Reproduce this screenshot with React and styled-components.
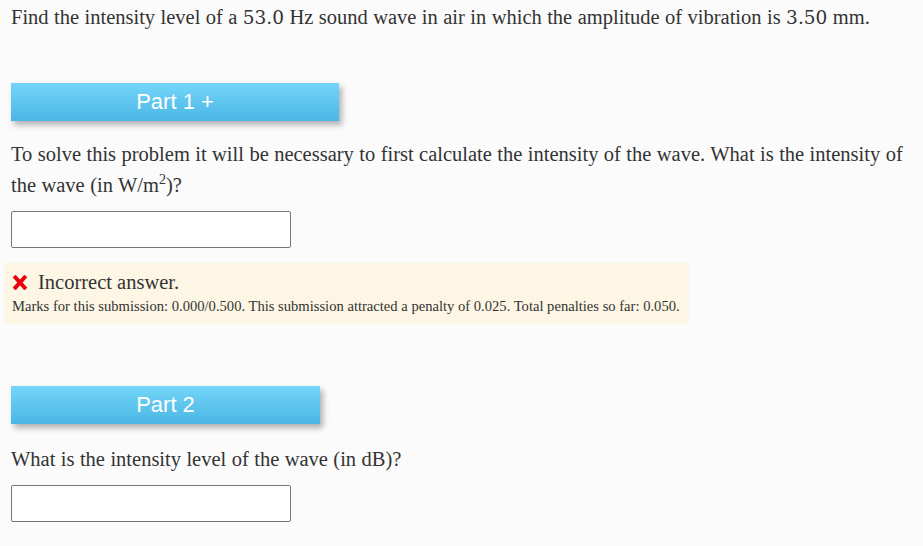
import styled, { createGlobalStyle } from "styled-components";

const GlobalStyle = createGlobalStyle`
  html, body {
    margin: 0;
    padding: 0;
    background: #fbfbfb;
  }
`;

const Page = styled.div`
  padding: 2px 11px 20px 11px;
  width: 901px;
  font-family: "Liberation Serif", "Times New Roman", serif;
  color: #333;
`;

const Text = styled.p`
  margin: ${(p) => p.$mt || 0}px 0 0 0;
  font-size: 20.5px;
  line-height: 31px;
  word-spacing: 0.3px;
  sup {
    font-size: 14px;
    line-height: 0;
    vertical-align: 8px;
  }
`;

const Num = styled.span`
  font-family: "DejaVu Serif", serif;
  font-size: 18.5px;
`;

const PartButton = styled.div`
  margin-top: ${(p) => p.$mt}px;
  width: ${(p) => p.$w}px;
  height: 38px;
  display: flex;
  align-items: center;
  justify-content: center;
  background: linear-gradient(to bottom, #74d5f8, #4ab6e5);
  box-shadow: 3px 4px 6px rgba(0, 0, 0, 0.3);
  color: #fff;
  font-family: "Liberation Sans", Arial, sans-serif;
  font-size: 22px;
`;

const AnswerInput = styled.input`
  display: block;
  margin-top: 10px;
  width: 280px;
  height: 37px;
  box-sizing: border-box;
  border: 1px solid #767676;
  border-radius: 2px;
  background: #fff;
  padding: 0 6px;
  font-size: 18px;
`;

const Feedback = styled.div`
  margin: 15px 0 0 -7px;
  width: 685px;
  height: 61px;
  box-sizing: border-box;
  background: #fdf6e4;
  padding: 7px 8px 0 8px;
`;

const Verdict = styled.div`
  display: flex;
  align-items: center;
  gap: 11px;
  padding-left: 1px;
  font-size: 20.5px;
  line-height: 24px;
`;

const Marks = styled.div`
  margin-top: 3px;
  font-size: 14.6px;
  line-height: 18px;
`;

function Cross() {
  return (
    <svg width="14" height="15" viewBox="0 0 14 15">
      <path d="M2.5 2.5 L11.5 12.5 M11.5 2.5 L2.5 12.5" stroke="#e8000b" strokeWidth="4" strokeLinecap="square" />
    </svg>
  );
}

export default function App() {
  return (
    <>
      <GlobalStyle />
      <Page>
        <Text>
          Find the intensity level of a <Num>53.0</Num> Hz sound wave in air in which the amplitude of vibration is{" "}
          <Num>3.50</Num> mm.
        </Text>

        <PartButton $mt={50} $w={328}>Part 1 +</PartButton>
        <Text $mt={18}>
          To solve this problem it will be necessary to first calculate the intensity of the wave. What is the intensity of
          the wave (in W/m<sup>2</sup>)?
        </Text>
        <AnswerInput type="text" />
        <Feedback>
          <Verdict>
            <Cross />
            Incorrect answer.
          </Verdict>
          <Marks>
            Marks for this submission: 0.000/0.500. This submission attracted a penalty of 0.025. Total penalties so far: 0.050.
          </Marks>
        </Feedback>

        <PartButton $mt={62} $w={309}>Part 2</PartButton>
        <Text $mt={20}>What is the intensity level of the wave (in dB)?</Text>
        <AnswerInput type="text" />
      </Page>
    </>
  );
}
